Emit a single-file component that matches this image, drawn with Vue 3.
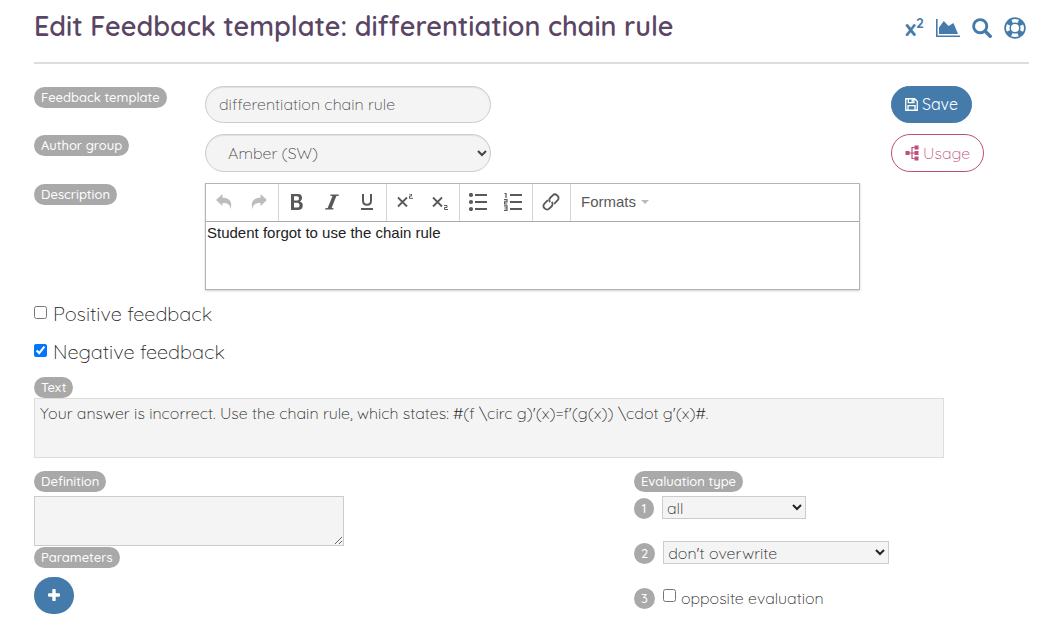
<script setup>
import { ref } from 'vue'

const name = ref('differentiation chain rule')
const group = ref('Amber (SW)')
const description = ref('Student forgot to use the chain rule')
const positive = ref(false)
const negative = ref(true)
const text = ref("Your answer is incorrect. Use the chain rule, which states: #(f \\circ g)'(x)=f'(g(x)) \\cdot g'(x)#.")
const definition = ref('')
const evaluation = ref('all')
const overwrite = ref("don't overwrite")
const opposite = ref(false)
</script>

<template>
  <div class="page">
    <header class="top">
      <h1>Edit Feedback template: differentiation chain rule</h1>
      <nav class="tools">
        <a href="#" aria-label="Formulas" class="formula">x<span>2</span></a>
        <a href="#" aria-label="Statistics">
          <svg width="24" height="20" viewBox="0 0 24 20"><path d="M0 1h1.600v16.400H24V19H0zM3 16V9.500L7.800 3l4.700 5 5-3 4.500 11H3z" /></svg>
        </a>
        <a href="#" aria-label="Search">
          <svg width="20" height="20" viewBox="0 0 20 20"><circle cx="8.200" cy="8.200" r="6.600" fill="none" stroke="currentColor" stroke-width="2.900" /><path d="M13 13l5.200 5.200" stroke="currentColor" stroke-width="3.400" stroke-linecap="round" /></svg>
        </a>
        <a href="#" aria-label="Help">
          <svg width="22" height="22" viewBox="0 0 22 22" fill="none" stroke="currentColor"><circle cx="11" cy="11" r="9.900" stroke-width="1.700" /><circle cx="11" cy="11" r="4.800" stroke-width="1.500" /><circle cx="11" cy="11" r="7.400" stroke-width="5" stroke-dasharray="5.200 6.424" stroke-dashoffset="-3.212" /></svg>
        </a>
      </nav>
    </header>

    <form @submit.prevent>
      <section class="fields">
        <div><label class="pill" for="name">Feedback template</label></div>
        <div><input id="name" v-model="name" class="round" type="text"></div>
        <div>
          <button class="btn save" type="submit">
            <svg width="13" height="13" viewBox="0 0 14 14" fill="none" stroke="currentColor" stroke-width="1.400"><path d="M.8.8h9.600l2.800 2.800v9.600H.8zM3.200 13V8.200h7.600V13M3.600 1v4h6V1" /><path d="M7 1.500h1.800v2.600H7z" fill="currentColor" stroke="none" /></svg>
            Save
          </button>
        </div>

        <div><label class="pill" for="group">Author group</label></div>
        <div>
          <select id="group" v-model="group" class="round">
            <option>Amber (SW)</option>
          </select>
        </div>
        <div>
          <button class="btn usage" type="button">
            <svg width="14" height="16" viewBox="0 0 14 16" fill="currentColor"><path d="M0.500 6h4v4h-4zM9.500 .5H13.500v4H9.500zM9.500 6H13.500v4H9.500zM9.500 11.500H13.500v4H9.500z" /><path d="M4 8h6M9.500 2.500H7v11h2.500" fill="none" stroke="currentColor" stroke-width="1.200" /></svg>
            Usage
          </button>
        </div>

        <div><label class="pill" for="description">Description</label></div>
        <div class="editor">
          <div class="toolbar">
            <div class="group">
              <button type="button" aria-label="Undo" class="off"><svg width="16" height="16" viewBox="0 0 16 16"><path d="M0 6L6.500 0v3.800c7 0 10.500 4.200 7.800 11.700.2-4.500-2-6.500-7.800-6.500V12z" /></svg></button>
              <button type="button" aria-label="Redo" class="off"><svg width="16" height="16" viewBox="0 0 16 16"><path d="M16 6L9.500 0v3.800C2.500 3.800-1 8 1.700 15.500 1.500 11 3.700 9 9.500 9V12z" /></svg></button>
            </div>
            <div class="group">
              <button type="button" aria-label="Bold"><svg width="16" height="16" viewBox="0 0 16 16"><path fill-rule="evenodd" d="M2 0h6.500C12 0 13 1.600 13 3.800c0 1.700-.7 2.900-2.200 3.600 2 .6 3 2 3 4 0 3-1.800 4.600-5.300 4.600H2zM5 2.300v4.200h2.800c1.400 0 2.200-.7 2.200-2.100S9.200 2.300 7.800 2.300zM5 8.800v4.800h3.100c1.600 0 2.400-.8 2.400-2.400 0-1.500-.9-2.400-2.400-2.400z" /></svg></button>
              <button type="button" aria-label="Italic"><svg width="16" height="16" viewBox="0 0 16 16"><path d="M6.500.500H15l-.3 1.200-2.300.2L7.600 14l2 .2-.3 1.300H1l.3-1.200 2.400-.3L8.500 2l-2.200-.3z" /></svg></button>
              <button type="button" aria-label="Underline"><svg width="16" height="16" viewBox="0 0 16 16"><path d="M4 0v6.500c0 3 1.200 4.300 4 4.300s4-1.300 4-4.300V0M2 15h12" fill="none" stroke="currentColor" stroke-width="2" /></svg></button>
            </div>
            <div class="group">
              <button type="button" aria-label="Superscript"><svg width="16" height="16" viewBox="0 0 16 16" fill="none" stroke="currentColor"><path d="M1 3.500l9 9M10 3.500l-9 9" stroke-width="1.800" /><path d="M12 .1h2.500v1.900h-2v2.300H16" stroke-width="1" /></svg></button>
              <button type="button" aria-label="Subscript"><svg width="16" height="16" viewBox="0 0 16 16" fill="none" stroke="currentColor"><path d="M1 3.500l9 9M10 3.500l-9 9" stroke-width="1.800" /><path d="M12 11.500h3v2h-2.500v2H16" stroke-width="1" /></svg></button>
            </div>
            <div class="group">
              <button type="button" aria-label="Bullet list"><svg width="20" height="18" viewBox="0 0 20 18"><circle cx="3" cy="2" r="2.100" /><circle cx="3" cy="9" r="2.100" /><circle cx="3" cy="16" r="2.100" /><path d="M7 1h12v2H7zM7 8h12v2H7zM7 15h12v2H7z" /></svg></button>
              <button type="button" aria-label="Numbered list"><svg width="20" height="18" viewBox="0 0 20 18"><path d="M7 1h12v2H7zM7 8h12v2H7zM7 15h12v2H7z" /><path d="M1.500.5H3v4.500M1 6.600h3v2.200H1.600V11h2.700M1 12.900h3v4.400H1M1.500 15H4" fill="none" stroke="currentColor" stroke-width="1.200" /></svg></button>
            </div>
            <div class="group">
              <button type="button" aria-label="Insert link"><svg width="18" height="18" viewBox="0 0 18 18" fill="none" stroke="currentColor" stroke-width="1.800"><g transform="rotate(-45 9 9)"><path d="M8 5.500H3a3 3 0 0 0-3 3v1a3 3 0 0 0 3 3h3.500a3 3 0 0 0 3-3" /><path d="M10 12.500h5a3 3 0 0 0 3-3v-1a3 3 0 0 0-3-3h-3.500a3 3 0 0 0-3 3" /></g></svg></button>
            </div>
            <button class="formats" type="button">Formats<i></i></button>
          </div>
          <textarea id="description" v-model="description"></textarea>
        </div>
      </section>

      <label class="check"><input v-model="positive" type="checkbox">Positive feedback</label>
      <label class="check"><input v-model="negative" type="checkbox">Negative feedback</label>

      <section class="message">
        <label class="pill" for="text">Text</label>
        <textarea id="text" v-model="text"></textarea>
      </section>

      <section class="bottom">
        <div class="column">
          <label class="pill" for="definition">Definition</label>
          <textarea id="definition" v-model="definition"></textarea>
          <span class="pill">Parameters</span>
          <button class="add" type="button" aria-label="Add parameter"><svg width="12" height="12" viewBox="0 0 12 12"><path d="M6 1.300v9.400M1.300 6h9.400" stroke="currentColor" stroke-width="3.400" stroke-linecap="round" /></svg></button>
        </div>
        <div class="column">
          <span class="pill">Evaluation type</span>
          <div class="line">
            <label class="pill" for="evaluation">1</label>
            <select id="evaluation" v-model="evaluation" class="short"><option>all</option></select>
          </div>
          <div class="line">
            <label class="pill" for="overwrite">2</label>
            <select id="overwrite" v-model="overwrite" class="long"><option>don't overwrite</option></select>
          </div>
          <div class="line last">
            <span class="pill">3</span>
            <label class="opposite"><input v-model="opposite" type="checkbox">opposite evaluation</label>
          </div>
        </div>
      </section>
    </form>
  </div>
</template>

<style>
body {
  margin: 0;
  background: #fff;
}
</style>

<style scoped>
.page {
  padding: 0 16px 20px 34px;
  font-family: Quicksand, Lato, sans-serif;
  font-size: 16px;
  font-weight: 300;
  color: #222;
}
.page * {
  box-sizing: border-box;
}
input, select, textarea, button {
  margin: 0;
  font: inherit;
  color: inherit;
}
svg {
  display: block;
  flex: none;
  fill: currentColor;
}
svg[fill="none"] {
  fill: none;
}
.top {
  display: flex;
  justify-content: space-between;
  height: 64px;
  border-bottom: 2px solid #ddd;
}
h1 {
  margin: 9px 0 0;
  font-size: 27px;
  line-height: 34px;
  font-weight: 600;
  color: #5a4565;
}
.tools {
  display: flex;
  align-items: center;
  gap: 12px;
  height: 55px;
  padding-right: 3px;
  color: #447bab;
}
.tools a {
  color: inherit;
  text-decoration: none;
}
.formula {
  display: flex;
  font-size: 22px;
  line-height: 24px;
  font-weight: 700;
}
.formula span {
  font-size: 14px;
  line-height: 14px;
}
.fields {
  display: grid;
  grid-template-columns: 171px minmax(0, 1fr) 138px;
  row-gap: 11px;
  padding-top: 22px;
}
.fields > :nth-child(3n + 2) {
  margin-right: 31px;
}
.pill {
  display: inline-block;
  height: 21px;
  padding: 0 7px;
  border-radius: 11px;
  background: #a9a9a9;
  color: #fff;
  font-size: 13px;
  line-height: 21px;
  font-weight: 500;
}
.fields .pill {
  margin-top: 1px;
}
.round {
  display: block;
  width: 286px;
  max-width: 100%;
  height: 37px;
  border: 1px solid #ccc;
  border-radius: 19px;
  padding: 0 13px 1px;
  background: #f4f4f4;
  box-shadow: inset 0 1px 1px rgba(0, 0, 0, .08);
  color: #444;
}
select.round {
  height: 38px;
  padding: 0 6px 0 18px;
}
.btn {
  display: flex;
  align-items: center;
  gap: 4px;
  height: 37px;
  padding: 0 13px 1px;
  border: 1px solid #447bab;
  border-radius: 19px;
  background: #447bab;
  color: #fff;
  font-weight: 400;
}
.usage {
  height: 38px;
  border-color: #be4d7c;
  background: #fff;
  color: #be4d7c;
  font-weight: 300;
}
.editor {
  border: 1px solid #b5b5b5;
  box-shadow: 0 1px 2px rgba(0, 0, 0, .2);
  font-family: Arial, "Liberation Sans", sans-serif;
  font-weight: 400;
}
.toolbar {
  display: flex;
  height: 38px;
  border-bottom: 1px solid #aaa;
  color: #595959;
}
.group {
  display: flex;
  align-items: center;
  gap: 3px;
  padding: 0 3px 2px 2px;
  border-right: 1px solid #d5d5d5;
}
.group button {
  display: flex;
  align-items: center;
  justify-content: center;
  width: 32px;
  height: 32px;
  padding: 0;
  border: 0;
  background: none;
}
.group .off {
  color: #bdbdbd;
}
.formats {
  display: flex;
  align-items: center;
  gap: 5px;
  padding: 0 10px 2px;
  border: 0;
  background: none;
  font-size: 15px;
}
.formats i {
  border: 4px solid transparent;
  border-top-color: #b5bbc0;
  border-bottom: 0;
}
.editor textarea {
  display: block;
  width: 100%;
  height: 67px;
  padding: 2px 1px;
  border: 0;
  resize: none;
  font-size: 15px;
  line-height: 18px;
  color: #222;
}
.check {
  display: flex;
  gap: 6px;
  width: fit-content;
  margin-top: 12px;
  font-size: 20px;
  line-height: 26px;
}
.fields + .check {
  margin-top: 11px;
}
input[type="checkbox"] {
  width: 13px;
  height: 13px;
}
.check input {
  margin-top: 5px;
}
.message {
  margin-top: 12px;
}
.message .pill,
.message textarea {
  display: block;
  width: fit-content;
}
.message textarea {
  width: calc(100% - 85px);
  height: 60px;
  padding: 4px 5px;
  border: 1px solid #ddd;
  background: #f4f4f4;
  resize: none;
  line-height: 20px;
}
.bottom {
  display: grid;
  grid-template-columns: 600px 1fr;
  margin-top: 13px;
}
.column {
  display: flex;
  flex-direction: column;
  align-items: flex-start;
}
#definition {
  width: 310px;
  height: 50px;
  margin: 4px 0 1px;
  border: 1px solid #ccc;
  background: #f4f4f4;
}
.add {
  display: flex;
  justify-content: center;
  width: 40px;
  height: 37px;
  margin-top: 9px;
  padding: 12px 0;
  border: 0;
  border-radius: 19px;
  background: #447bab;
  color: #fff;
}
.line {
  display: flex;
  align-items: flex-end;
  gap: 8px;
  height: 23px;
  margin: 4px 0 18px;
}
.line + .line {
  margin-top: 4px;
}
.line select {
  height: 23px;
  padding-bottom: 1px;
  border: 1px solid #ccc;
  border-radius: 0;
  background: #f4f4f4;
}
.line .pill {
  min-width: 20px;
  text-align: center;
}
.short {
  width: 144px;
}
.long {
  width: 226px;
}
.line.last {
  margin-bottom: 0;
}
.opposite {
  display: flex;
  gap: 5px;
  line-height: 22px;
}
.opposite input {
  margin-top: 2px;
}
</style>
